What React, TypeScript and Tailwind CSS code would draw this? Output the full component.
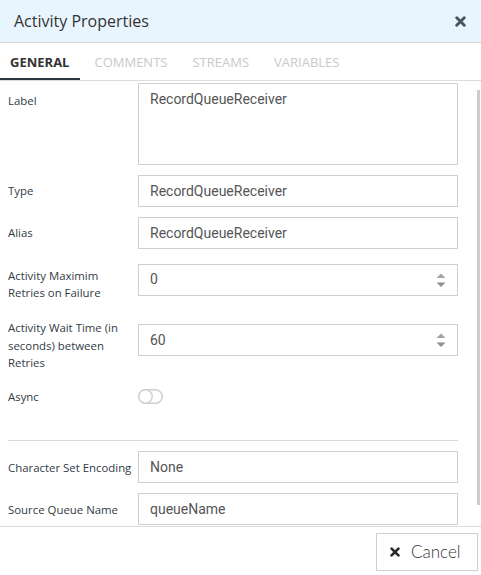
const sans = "font-['Open_Sans',sans-serif]";
const inputFont = "font-['Roboto',sans-serif]";

function Spinner() {
  return (
    <svg width="10" height="15" viewBox="0 0 10 15" className="shrink-0">
      <path d="M5 0.5 L9.5 5 L0.5 5 Z" fill="#a3a3a3" />
      <path d="M0.5 9.5 L9.5 9.5 L5 14 Z" fill="#8f8f8f" />
    </svg>
  );
}

function TextBox({ value }: { value: string }) {
  return (
    <input
      readOnly
      value={value}
      className={`h-[32px] w-[320px] border border-[#cfcfcf] bg-white px-[11px] text-[14px] text-[#555] outline-none ${inputFont}`}
    />
  );
}

function NumberBox({ value }: { value: string }) {
  return (
    <div className="flex h-[32px] w-[320px] items-center border border-[#cfcfcf] bg-white pl-[11px] pr-[11px]">
      <span className={`flex-1 text-[14px] text-[#555] ${inputFont}`}>{value}</span>
      <Spinner />
    </div>
  );
}

export default function App() {
  return (
    <div className={`relative flex h-[575px] w-[481px] flex-col overflow-hidden bg-white ${sans}`}>
      <header className="flex h-[43px] shrink-0 items-center justify-between border-b border-[#d3d6d9] bg-[#e9f5fe] pl-[14px] pr-[15px]">
        <h1 className="text-[16px] text-[#333]">Activity Properties</h1>
        <svg width="11" height="11" viewBox="0 0 10 10">
          <path d="M1.6 1.6 L8.4 8.4 M8.4 1.6 L1.6 8.4" stroke="#4b5560" strokeWidth="2.7" strokeLinecap="round" />
        </svg>
      </header>

      <nav className="flex h-[38px] shrink-0 gap-[3px] border-b border-[#dcdcdc] text-[13px]">
        <div className="flex items-center border-b-2 border-[#2c3542] pl-[10px] pr-[11px] pt-[5px] font-bold text-[#333]">GENERAL</div>
        <div className="flex items-center px-[11px] pt-[3px] text-[#c9c9c9]">COMMENTS</div>
        <div className="flex items-center px-[11px] pt-[3px] text-[#c9c9c9]">STREAMS</div>
        <div className="flex items-center px-[11px] pt-[3px] text-[#c9c9c9]">VARIABLES</div>
      </nav>

      <div className="relative flex-1 overflow-hidden pl-[8px] text-[11.4px] leading-[17.2px] text-[#313b45]">
        <div className="mt-[2px] flex items-start">
          <label className="w-[130px] shrink-0 pt-[9px]">Label</label>
          <textarea
            readOnly
            value="RecordQueueReceiver"
            className={`h-[82px] w-[320px] resize-none border border-[#cfcfcf] px-[11px] pt-[5px] text-[14px] leading-[20px] text-[#555] outline-none ${inputFont}`}
          />
        </div>

        <div className="mt-[10px] flex items-center">
          <label className="w-[130px] shrink-0">Type</label>
          <TextBox value="RecordQueueReceiver" />
        </div>

        <div className="mt-[10px] flex items-center">
          <label className="w-[130px] shrink-0">Alias</label>
          <TextBox value="RecordQueueReceiver" />
        </div>

        <div className="mt-[15px] flex items-start">
          <label className="w-[130px] shrink-0 pt-[3px]">Activity Maximim<br />Retries on Failure</label>
          <NumberBox value="0" />
        </div>

        <div className="mt-[18px] flex items-start">
          <label className="w-[130px] shrink-0">Activity Wait Time (in<br />seconds) between<br />Retries</label>
          <div className="mt-[5px]">
            <NumberBox value="60" />
          </div>
        </div>

        <div className="mt-[17px] flex items-start">
          <label className="w-[130px] shrink-0">Async</label>
          <svg width="25" height="15" viewBox="0 0 25 15" className="mt-[1px]">
            <rect x="0.75" y="0.75" width="23.5" height="13.5" rx="6.75" fill="white" stroke="#d0d0d0" strokeWidth="1.5" />
            <circle cx="7.5" cy="7.5" r="6.75" fill="white" stroke="#d0d0d0" strokeWidth="1.5" />
          </svg>
        </div>

        <div className="mt-[35px] h-px w-[450px] bg-[#dadada]" />

        <div className="mt-[10px] flex items-center">
          <label className="w-[130px] shrink-0">Character Set Encoding</label>
          <TextBox value="None" />
        </div>

        <div className="mt-[10px] flex items-center">
          <label className="w-[130px] shrink-0">Source Queue Name</label>
          <TextBox value="queueName" />
        </div>

        <div className="absolute right-[1px] top-[9px] h-[415px] w-[3px] bg-[#cdcdcd]" />
      </div>

      <footer className="flex h-[49px] shrink-0 items-start justify-end border-t border-[#dcdcdc] pr-[3px] pt-[6px]">
        <button className="flex h-[38px] w-[102px] items-center border border-[#cfcfcf] bg-white pl-[13px]">
          <svg width="10" height="10" viewBox="0 0 10 10">
            <path d="M1.6 1.6 L8.4 8.4 M8.4 1.6 L1.6 8.4" stroke="#2b2b2b" strokeWidth="2.7" strokeLinecap="round" />
          </svg>
          <span className="ml-[11px] font-['Lato',sans-serif] text-[17px] font-light text-[#333]">Cancel</span>
        </button>
      </footer>
    </div>
  );
}
